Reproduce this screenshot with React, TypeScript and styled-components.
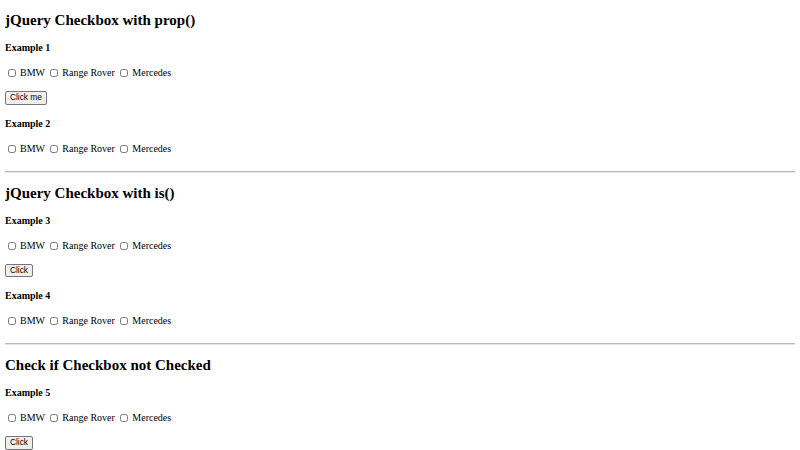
import React from "react";
import styled, { createGlobalStyle } from "styled-components";

const Global = createGlobalStyle`
  body {
    margin: 0 5px 5px;
    font-family: "Liberation Serif", "Times New Roman", serif;
    font-size: 10px;
    color: #000;
    background: #fff;
  }
`;

const Title = styled.h2`
  font-size: 15px;
  line-height: 17px;
  font-weight: bold;
  margin: 12px 0;
`;

const ExampleTitle = styled.h4`
  font-size: 10px;
  line-height: 12px;
  font-weight: bold;
  margin: 13px 0;
`;

const Row = styled.p`
  margin: 12px 0;
  line-height: 12px;
`;

const Check = styled.input.attrs({ type: "checkbox" })`
  width: 8px;
  height: 8px;
  margin: 0 2px 0 2.5px;
  vertical-align: -1px;
`;

const ButtonRow = styled.div`
  display: flex;
`;

const Btn = styled.button`
  font-family: "Liberation Sans", Arial, sans-serif;
  font-size: 8.3px;
  line-height: 9.5px;
  padding: 1px 4px;
  background: #efefef;
  border: 1px solid #767676;
  border-radius: 2px;
  color: #000;
`;

const Rule = styled.hr`
  margin: 16px 0 12px;
  border: 0;
  border-top: 1px solid #b8b8b8;
  border-bottom: 1px solid #e6e6e6;
`;

const Section = styled.section`
  display: block;
`;

function Cars() {
  return (
    <Row>
      <Check /> BMW <Check /> Range Rover <Check /> Mercedes
    </Row>
  );
}

function Action({ text }: { text: string }) {
  return (
    <ButtonRow>
      <Btn>{text}</Btn>
    </ButtonRow>
  );
}

export default function App() {
  return (
    <>
      <Global />
      <Section>
        <Title>jQuery Checkbox with prop()</Title>
        <ExampleTitle>Example 1</ExampleTitle>
        <Cars />
        <Action text="Click me" />
        <ExampleTitle>Example 2</ExampleTitle>
        <Cars />
      </Section>
      <Rule />
      <Section>
        <Title>jQuery Checkbox with is()</Title>
        <ExampleTitle>Example 3</ExampleTitle>
        <Cars />
        <Action text="Click" />
        <ExampleTitle>Example 4</ExampleTitle>
        <Cars />
      </Section>
      <Rule />
      <Section>
        <Title>Check if Checkbox not Checked</Title>
        <ExampleTitle>Example 5</ExampleTitle>
        <Cars />
        <Action text="Click" />
      </Section>
    </>
  );
}
